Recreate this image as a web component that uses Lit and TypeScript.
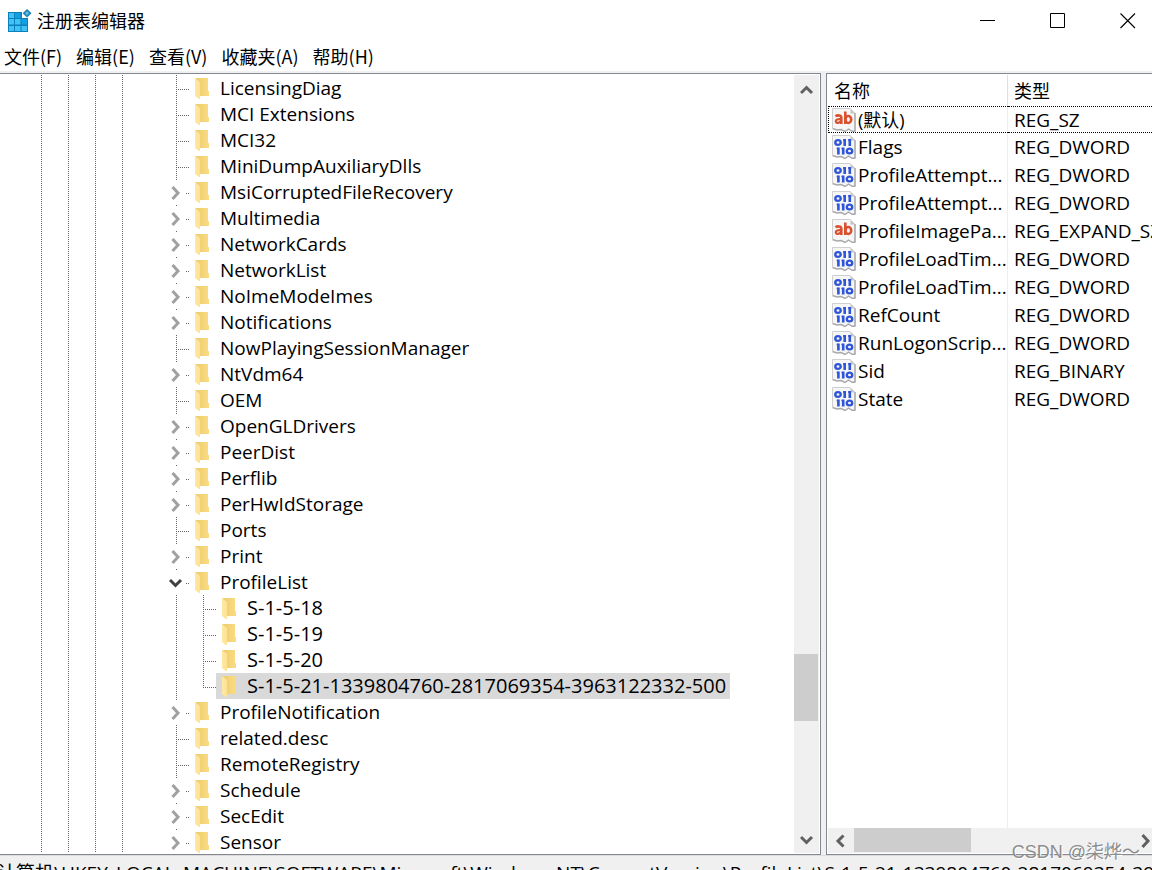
import { LitElement, html, css, svg, nothing } from "lit";
import { customElement, state } from "lit/decorators.js";
import { classMap } from "lit/directives/class-map.js";

interface TreeKey {
  name: string;
  depth: number;
  expand?: "closed" | "open";
  last?: boolean;
}

const key = (name: string, expand?: "closed" | "open"): TreeKey => ({ name, depth: 0, expand });
const child = (name: string, last = false): TreeKey => ({ name, depth: 1, last });

const KEYS: TreeKey[] = [
  key("LicensingDiag"),
  key("MCI Extensions"),
  key("MCI32"),
  key("MiniDumpAuxiliaryDlls"),
  key("MsiCorruptedFileRecovery", "closed"),
  key("Multimedia", "closed"),
  key("NetworkCards", "closed"),
  key("NetworkList", "closed"),
  key("NoImeModeImes", "closed"),
  key("Notifications", "closed"),
  key("NowPlayingSessionManager"),
  key("NtVdm64", "closed"),
  key("OEM"),
  key("OpenGLDrivers", "closed"),
  key("PeerDist", "closed"),
  key("Perflib", "closed"),
  key("PerHwIdStorage", "closed"),
  key("Ports"),
  key("Print", "closed"),
  key("ProfileList", "open"),
  child("S-1-5-18"),
  child("S-1-5-19"),
  child("S-1-5-20"),
  child("S-1-5-21-1339804760-2817069354-3963122332-500", true),
  key("ProfileNotification", "closed"),
  key("related.desc"),
  key("RemoteRegistry"),
  key("Schedule", "closed"),
  key("SecEdit", "closed"),
  key("Sensor", "closed"),
];

const VALUES = [
  { name: "(默认)", type: "REG_SZ" },
  { name: "Flags", type: "REG_DWORD" },
  { name: "ProfileAttempt...", type: "REG_DWORD" },
  { name: "ProfileAttempt...", type: "REG_DWORD" },
  { name: "ProfileImagePa...", type: "REG_EXPAND_SZ" },
  { name: "ProfileLoadTim...", type: "REG_DWORD" },
  { name: "ProfileLoadTim...", type: "REG_DWORD" },
  { name: "RefCount", type: "REG_DWORD" },
  { name: "RunLogonScrip...", type: "REG_DWORD" },
  { name: "Sid", type: "REG_BINARY" },
  { name: "State", type: "REG_DWORD" },
];

const MENUS = ["文件(F)", "编辑(E)", "查看(V)", "收藏夹(A)", "帮助(H)"];

const folderIcon = html`<svg class="folder" width="15" height="22" viewBox="0 0 15 22" aria-hidden="true">
  <defs>
    <linearGradient id="back" x1="0" x2="1"><stop offset="0" stop-color="#eccb6c" /><stop offset="1" stop-color="#fbdc83" /></linearGradient>
    <linearGradient id="front" x1="0" x2="1"><stop offset="0" stop-color="#ffe8a3" /><stop offset="1" stop-color="#ffe293" /></linearGradient>
  </defs>
  <path d="M0 0H13V13H14V18H3V4Z" fill="url(#back)" />
  <path d="M0 0L5 4V21H4L0 18Z" fill="url(#front)" />
</svg>`;

const page = svg`
  <path d="M1 .5H18.500L23.500 5.500V23L20 23.500L16.500 21L13 23.500L9 21.500L5 22L1 20Z" fill="#f6f6f7" />
  <path d="M.5 20V.5H18.500" fill="none" stroke="#cfcfd1" />
  <path d="M18.500 .5L23.500 5.500H18.500Z" fill="#c4c4c6" />
  <path d="M23 5V23" stroke="#a5a5a8" stroke-width="1.500" />
  <path d="M.5 20.500L5 22L9 21.500L13 23.500L16.500 21L20 23.300H23.500" fill="none" stroke="#a9a9ac" stroke-width="1.400" />`;

const stringIcon = html`<svg class="kind" width="24" height="24" viewBox="0 0 24 24" aria-hidden="true">
  ${page}
  <g fill="none" stroke="#d9512f" stroke-width="2.600">
    <path d="M3.500 8.300C5 7.200 9.300 6.700 9.300 9.500V16" />
    <path d="M9 11.200C6 10.900 3.800 11.500 3.800 13.300C3.800 15.600 8 15.400 9.200 12.800" stroke-width="2.200" />
    <path d="M13.300 3.500V16" />
    <ellipse cx="16.300" cy="11.500" rx="2.900" ry="3.500" />
  </g>
</svg>`;

const binaryIcon = html`<svg class="kind" width="24" height="24" viewBox="0 0 24 24" aria-hidden="true">
  ${page}
  <g fill="none" stroke="#2f55d8" stroke-width="2.400">
    <ellipse cx="6" cy="7.500" rx="2.700" ry="2.400" />
    <path d="M12.700 4V11M17.800 4V11M6.400 12.500V19.500M11.200 12.500V19.500" stroke-width="2.600" />
    <path d="M11 5H12.700M16 5H17.800M4.700 13.500H6.400M9.500 13.500H11.200" stroke-width="1.400" />
    <ellipse cx="17.500" cy="16" rx="2.700" ry="2.400" />
  </g>
</svg>`;

const appIcon = html`<svg class="logo" width="24" height="24" viewBox="0 0 24 24" aria-hidden="true">
  <path d="M0 3H14V9H20V23H0Z" fill="#0d7fbd" />
  <g fill="#3fc3f5">
    <path d="M1 4H6V9H1ZM1 10H6V15.500H1ZM7 10H12.500V15.500H7ZM1 17H6V22H1ZM7 17H12.500V22H7ZM13.500 17H19V22H13.500Z" />
    <path d="M7 4H12.500V9H7ZM13.500 10H19V15.500H13.500Z" fill="#12a0e0" />
  </g>
  <path d="M19 0L23.500 4.300L19 8.600L14.700 4.300Z" fill="#1b7fb4" />
  <path d="M19 2L21.300 4.300L19 6.500L16.800 4.300Z" fill="#55b9e6" />
</svg>`;

const arrow = (d: string) => html`<svg width="14" height="14" viewBox="0 0 14 14" aria-hidden="true">
  <path d=${d} fill="none" stroke="currentColor" stroke-width="3" />
</svg>`;
const RIGHT = "M3.500 1L9 7L3.500 13";
const LEFT = "M9.500 1.500L4 7L9.500 12.500";
const DOWN = "M1 4L6.500 9.500L12 4";
const UP = "M1 10L6.500 4.500L12 10";

@customElement("app-root")
export class AppRoot extends LitElement {
  @state() private selected = 23;

  static styles = css`
    :host {
      display: flex;
      flex-direction: column;
      position: relative;
      height: 100vh;
      overflow: hidden;
      background: #fff;
      color: #000;
      font: 19px/26px "Open Sans", "Noto Sans CJK SC", sans-serif;
      white-space: nowrap;
    }
    * { box-sizing: border-box; }
    button {
      margin: 0;
      padding: 0;
      border: 0;
      background: none;
      color: inherit;
      font: inherit;
      text-align: left;
    }
    svg { display: block; flex: none; }

    .titlebar { display: flex; align-items: center; height: 41px; padding-left: 8px; flex: none; }
    .title { flex: 1; margin: 0; padding: 0 0 2px 5px; font-size: 18px; font-weight: 400; font-family: "Noto Sans CJK SC", sans-serif; }
    .controls { display: flex; margin-right: -11px; }
    .control { display: flex; align-items: center; justify-content: center; width: 70px; height: 41px; }

    .menubar { display: flex; gap: 14px; flex: none; height: 32px; padding: 2px 4px; border-bottom: 2px solid #f0f0f3; }
    .menu { font: 18px/26px "Noto Sans CJK SC", sans-serif; }

    .panes { display: grid; grid-template-columns: minmax(0, 821fr) minmax(0, 326fr); gap: 5px; flex: 1; min-height: 0; background: #f0f0f0; }
    .pane { display: flex; min-width: 0; min-height: 0; background: #fff; border: 1px solid #828790; padding: 1px 1px 1px 0; overflow: hidden; }
    .treepane { border-left: 0; }
    .listpane { flex-direction: column; border-right: 0; padding: 1px 0 1px 1px; }

    .tree { flex: 1; min-width: 0; overflow: hidden; padding-left: 27px; }
    .row { display: flex; height: 26px; }
    .cell { position: relative; flex: none; width: 27px; height: 26px; }
    .line { background: repeating-linear-gradient(#666 0 1px, transparent 1px 2px) 14px 0 / 1px 100% no-repeat; }
    .branch {
      background:
        repeating-linear-gradient(#666 0 1px, transparent 1px 2px) 14px 0 / 1px 100% no-repeat,
        repeating-linear-gradient(90deg, #666 0 1px, transparent 1px 2px) 14px 14px / 13px 1px no-repeat;
    }
    .branch.last { background-size: 1px 15px, 13px 1px; }
    .branch.parent { background-size: 1px 1px, 3px 1px; background-position: 14px 0, 24px 14px; }
    .toggle { display: flex; align-items: center; width: 20px; height: 27px; padding: 1px 0 0 7px; color: #a0a0a0; }
    .toggle.open { color: #404040; }
    .label { display: flex; height: 26px; padding: 0 4px 0 6px; line-height: 26px; }
    .label.selected { background: #d9d9d9; }
    .label.sid { font-size: 20px; }
    .folder { width: 15px; margin: 3px 10px 0 0; }

    .scroll { display: flex; flex: none; background: #f0f0f0; color: #606060; }
    .vertical { flex-direction: column; width: 25px; }
    .horizontal { height: 25px; margin-right: -7px; }
    .step { display: flex; align-items: center; justify-content: center; width: 25px; height: 26px; flex: none; }
    .horizontal .step { width: 26px; height: 25px; }
    .step.up { align-items: flex-end; padding-bottom: 4px; }
    .thumb { background: #cdcdcd; }
    .vertical .thumb { width: 24px; }
    .horizontal .thumb { height: 24px; }
    .before-v { flex: 552; }
    .thumb-v { flex: 67; }
    .after-v { flex: 106; }
    .thumb-h { flex: 117; }
    .after-h { flex: 162; }

    .list { flex: 1; min-height: 0; overflow: hidden; background: linear-gradient(#e5f0f8, #e5f0f8) 179px 0 / 1px 100% no-repeat; }
    .values { width: 100%; table-layout: fixed; border-collapse: separate; border-spacing: 0; }
    .name-col { width: 180px; }
    th { height: 31px; padding: 0 0 1px 6px; font: 18px/26px "Noto Sans CJK SC", sans-serif; text-align: left; }
    .name-head { border-right: 1px solid #e0e0e0; }
    td { height: 28px; padding: 0 0 0 6px; }
    .name-cell { padding-left: 4px; }
    .name { display: flex; align-items: center; gap: 2px; height: 28px; }
    .focused td { border: 1px dotted #000; border-width: 1px 0; height: 27px; line-height: 24px; }
    .focused .name { height: 25px; }
    .focused .name-cell { border-left-width: 1px; padding-left: 3px; }
    .focused .name span { font-size: 18px; }

    .status { flex: none; height: 15px; overflow: hidden; padding-top: 4px; background: #f0f0f0; border-top: 1px solid #dcdcdc; }
    .path { display: block; margin-left: -3px; line-height: 26px; }
    .watermark {
      position: absolute;
      right: 12px;
      bottom: 4px;
      color: #8d8d8d;
      font: 18px/28px "Liberation Sans", "Noto Sans CJK SC", sans-serif;
      text-shadow: 1px 1px 0 #fff;
      pointer-events: none;
    }
  `;

  private renderRow(k: TreeKey, index: number) {
    return html`<div class="row" role="treeitem" aria-level=${k.depth + 5} aria-selected=${index === this.selected}
      aria-expanded=${k.expand ? String(k.expand === "open") : nothing}>
      <span class="cell line"></span><span class="cell line"></span><span class="cell line"></span><span class="cell line"></span>
      <span class="cell"></span>
      ${k.depth ? html`<span class="cell line"></span>` : nothing}
      <span class=${classMap({ cell: true, branch: true, last: !!k.last, parent: !!k.expand })}>
        ${k.expand
          ? html`<button class=${classMap({ toggle: true, open: k.expand === "open" })} aria-label=${k.name}>
              ${arrow(k.expand === "open" ? DOWN : RIGHT)}
            </button>`
          : nothing}
      </span>
      <button class=${classMap({ label: true, sid: k.depth > 0, selected: index === this.selected })} @click=${() => (this.selected = index)}>
        ${folderIcon}<span>${k.name}</span>
      </button>
    </div>`;
  }

  render() {
    return html`
      <header class="titlebar">
        ${appIcon}
        <h1 class="title">注册表编辑器</h1>
        <div class="controls">
          <button class="control" aria-label="最小化">
            <svg width="16" height="16" viewBox="0 0 16 16"><path d="M0 7.500H15" stroke="#000" /></svg>
          </button>
          <button class="control" aria-label="最大化">
            <svg width="16" height="16" viewBox="0 0 16 16"><path d="M.5 .5H14.500V14.500H.5Z" fill="none" stroke="#000" /></svg>
          </button>
          <button class="control" aria-label="关闭">
            <svg width="16" height="16" viewBox="0 0 16 16"><path d="M.5 .5L15 15M15 .5L.5 15" stroke="#000" stroke-width="1.100" /></svg>
          </button>
        </div>
      </header>
      <nav class="menubar">${MENUS.map((m) => html`<button class="menu">${m}</button>`)}</nav>
      <main class="panes">
        <section class="pane treepane">
          <div class="tree" role="tree">${KEYS.map((k, i) => this.renderRow(k, i))}</div>
          <div class="scroll vertical">
            <button class="step up" aria-label="向上滚动">${arrow(UP)}</button>
            <div class="before-v"></div>
            <div class="thumb thumb-v"></div>
            <div class="after-v"></div>
            <button class="step" aria-label="向下滚动">${arrow(DOWN)}</button>
          </div>
        </section>
        <section class="pane listpane">
          <div class="list">
            <table class="values">
              <colgroup><col class="name-col" /><col /></colgroup>
              <thead><tr><th class="name-head">名称</th><th>类型</th></tr></thead>
              <tbody>
                ${VALUES.map(
                  (v, i) => html`<tr class=${classMap({ focused: i === 0 })}>
                    <td class="name-cell"><div class="name">${/SZ$/.test(v.type) ? stringIcon : binaryIcon}<span>${v.name}</span></div></td>
                    <td>${v.type}</td>
                  </tr>`
                )}
              </tbody>
            </table>
          </div>
          <div class="scroll horizontal">
            <button class="step" aria-label="向左滚动">${arrow(LEFT)}</button>
            <div class="thumb thumb-h"></div>
            <div class="after-h"></div>
            <button class="step" aria-label="向右滚动">${arrow(RIGHT)}</button>
          </div>
        </section>
      </main>
      <footer class="status">
        <span class="path">计算机\\HKEY_LOCAL_MACHINE\\SOFTWARE\\Microsoft\\Windows NT\\CurrentVersion\\ProfileList\\S-1-5-21-1339804760-2817069354-3963122332-500</span>
      </footer>
      <div class="watermark">CSDN @柒烨～</div>
    `;
  }
}
